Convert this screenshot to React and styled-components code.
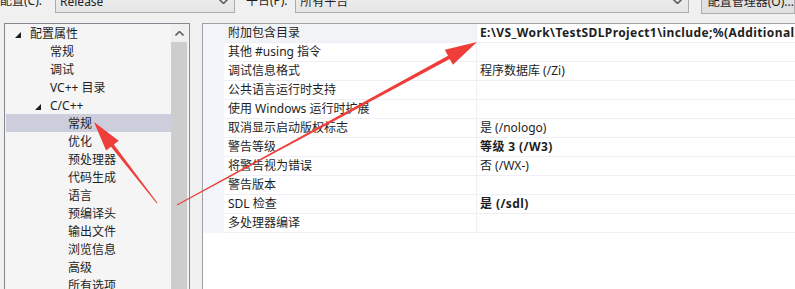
import React from "react";
import styled, { createGlobalStyle } from "styled-components";

const Global = createGlobalStyle`
  html, body { margin: 0; padding: 0; background: #f0f0f0; overflow: hidden; }
  body { font-family: "Noto Sans", "Noto Sans CJK SC", sans-serif; font-size: 12px; color: #1e1e1e; }
`;

const Window = styled.div`
  position: relative;
  width: 795px;
  height: 289px;
  overflow: hidden;
  background: #f0f0f0;
`;

const Toolbar = styled.div`
  display: flex;
  align-items: flex-start;
  height: 24px;
  margin-top: -11px;
`;

const Label = styled.div`
  height: 24px;
  line-height: 24px;
  margin-left: ${(p) => p.$ml || 0}px;
  width: ${(p) => p.$w}px;
  white-space: nowrap;
`;

const Combo = styled.div`
  box-sizing: border-box;
  width: ${(p) => p.$w}px;
  height: 24px;
  border: 1px solid #acacac;
  background: linear-gradient(#f0f0f0, #e5e5e5);
  display: flex;
  align-items: center;
  justify-content: space-between;
  padding: 0 6px 0 4px;
`;

const ComboText = styled.span`
  white-space: nowrap;
`;

const Button = styled.div`
  box-sizing: border-box;
  margin-left: 12px;
  height: 25px;
  width: 100px;
  border: 1px solid #adadad;
  background: #e1e1e1;
  padding-left: 6px;
  line-height: 23px;
  white-space: nowrap;
`;

const Panels = styled.div`
  display: flex;
  gap: 12px;
  padding-left: 4px;
  margin-top: 10px;
  align-items: flex-start;
`;

const TreePanel = styled.div`
  box-sizing: border-box;
  width: 186px;
  height: 300px;
  border: 1px solid #828790;
  background: #f5f5f5;
  display: flex;
  flex-shrink: 0;
`;

const Tree = styled.div`
  flex: 1;
  padding-left: 1px;
`;

const TreeRow = styled.div`
  height: 18px;
  display: flex;
  align-items: center;
  position: relative;
  padding-left: ${(p) => p.$indent}px;
  background: ${(p) => (p.$selected ? "#cccedb" : "transparent")};
  white-space: nowrap;
`;

const Toggle = styled.svg`
  position: absolute;
  left: ${(p) => p.$indent - 15}px;
  top: 8px;
  width: 6px;
  height: 6px;
`;

const ScrollBar = styled.div`
  width: 17px;
  margin-right: 1px;
  background: #f0f0f0;
  display: flex;
  flex-direction: column;
`;

const ScrollUp = styled.div`
  height: 18px;
  display: flex;
  align-items: center;
  justify-content: center;
`;

const Thumb = styled.div`
  flex: 1;
  margin: 0 1px 0 0;
  background: #cdcdcd;
`;

const GridPanel = styled.div`
  box-sizing: border-box;
  width: 640px;
  height: 300px;
  border: 1px solid #a0a0a0;
  border-right: none;
  background: #ffffff;
  flex-shrink: 0;
`;

const GridRow = styled.div`
  display: grid;
  grid-template-columns: 21px 252px 1px 1fr;
  height: 19px;
`;

const Gutter = styled.div`
  background: #f3f5fa;
`;

const NameCell = styled.div`
  box-sizing: border-box;
  padding-left: 4px;
  line-height: 18px;
  border-bottom: 1px solid #eef0f6;
  background: ${(p) => (p.$active ? "#f2f3f7" : "#ffffff")};
  white-space: nowrap;
  overflow: hidden;
`;

const Sep = styled.div`
  background: #eef0f6;
`;

const ValueCell = styled.div`
  box-sizing: border-box;
  padding-left: 3px;
  line-height: 18px;
  border-bottom: 1px solid #eef0f6;
  font-weight: ${(p) => (p.$bold ? 700 : 400)};
  letter-spacing: ${(p) => (p.$bold ? "0.4px" : "0")};
  white-space: nowrap;
  overflow: hidden;
`;

const Overlay = styled.svg`
  position: absolute;
  left: 0;
  top: 0;
  width: 795px;
  height: 289px;
  pointer-events: none;
`;

const treeItems = [
  { t: "配置属性", level: 0, toggle: true },
  { t: "常规", level: 1 },
  { t: "调试", level: 1 },
  { t: "VC++ 目录", level: 1 },
  { t: "C/C++", level: 1, toggle: true },
  { t: "常规", level: 2, selected: true },
  { t: "优化", level: 2 },
  { t: "预处理器", level: 2 },
  { t: "代码生成", level: 2 },
  { t: "语言", level: 2 },
  { t: "预编译头", level: 2 },
  { t: "输出文件", level: 2 },
  { t: "浏览信息", level: 2 },
  { t: "高级", level: 2 },
  { t: "所有选项", level: 2 },
];

const indents = [24, 44, 62];

const props = [
  ["附加包含目录", "E:\\VS_Work\\TestSDLProject1\\include;%(AdditionalIncludeDirectories)", true],
  ["其他 #using 指令", "", false],
  ["调试信息格式", "程序数据库 (/Zi)", false],
  ["公共语言运行时支持", "", false],
  ["使用 Windows 运行时扩展", "", false],
  ["取消显示启动版权标志", "是 (/nologo)", false],
  ["警告等级", "等级 3 (/W3)", true],
  ["将警告视为错误", "否 (/WX-)", false],
  ["警告版本", "", false],
  ["SDL 检查", "是 (/sdl)", true],
  ["多处理器编译", "", false],
];

function arrowPoints(S, T, L, W, w0, w1) {
  const dx = T[0] - S[0];
  const dy = T[1] - S[1];
  const len = Math.hypot(dx, dy);
  const ux = dx / len, uy = dy / len;
  const nx = -uy, ny = ux;
  const B = [T[0] - L * ux, T[1] - L * uy];
  const p = (P, k) => `${(P[0] + k * nx).toFixed(1)},${(P[1] + k * ny).toFixed(1)}`;
  return [p(S, w0), p(B, w1), p(B, W), `${T[0]},${T[1]}`, p(B, -W), p(B, -w1), p(S, -w0)].join(" ");
}

const Chevron = ({ w = 9, h = 5 }) => (
  <svg width={w} height={h} viewBox="0 0 9 5">
    <polyline points="0.5,0.5 4.5,4.5 8.5,0.5" fill="none" stroke="#606060" strokeWidth="1.6" />
  </svg>
);

export default function App() {
  return (
    <>
      <Global />
      <Window>
        <Toolbar>
          <Label $w={59}>配置(C):</Label>
          <Combo $w={192}>
            <ComboText>Release</ComboText>
            <Chevron />
          </Combo>
          <Label $ml={11} $w={53}>平台(P):</Label>
          <Combo $w={421}>
            <ComboText>所有平台</ComboText>
            <Chevron />
          </Combo>
          <Button>配置管理器(O)...</Button>
        </Toolbar>
        <Panels>
          <TreePanel>
            <Tree>
              {treeItems.map((it, i) => (
                <TreeRow key={i} $indent={indents[it.level]} $selected={it.selected}>
                  {it.toggle && (
                    <Toggle $indent={indents[it.level]} viewBox="0 0 6 6">
                      <polygon points="6,0 6,6 0,6" fill="#1e1e1e" />
                    </Toggle>
                  )}
                  {it.t}
                </TreeRow>
              ))}
            </Tree>
            <ScrollBar>
              <ScrollUp>
                <svg width="9" height="5" viewBox="0 0 9 5">
                  <polyline points="0.5,4.5 4.5,0.5 8.5,4.5" fill="none" stroke="#606060" strokeWidth="1.6" />
                </svg>
              </ScrollUp>
              <Thumb />
            </ScrollBar>
          </TreePanel>
          <GridPanel>
            {props.map(([name, value, bold], i) => (
              <GridRow key={i}>
                <Gutter />
                <NameCell $active={i === 0}>{name}</NameCell>
                <Sep />
                <ValueCell $bold={bold}>{value}</ValueCell>
              </GridRow>
            ))}
          </GridPanel>
        </Panels>
        <Overlay viewBox="0 0 795 289">
          <polygon points={arrowPoints([157, 203], [94, 122], 30, 8, 0.5, 1.8)} fill="#ef3e3a" />
          <polygon points={arrowPoints([177, 205], [477, 42], 32, 8.5, 0.5, 1.8)} fill="#ef3e3a" />
        </Overlay>
      </Window>
    </>
  );
}
